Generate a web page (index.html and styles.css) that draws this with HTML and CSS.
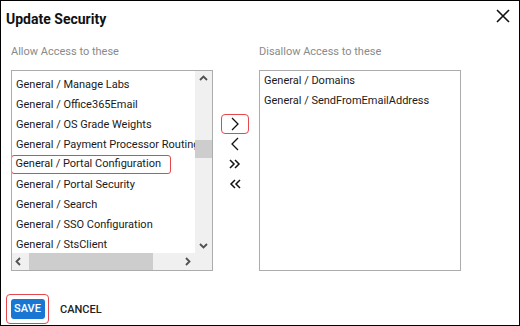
FILE: index.html
```html
<!DOCTYPE html>
<html>
<head>
<meta charset="utf-8">
<link rel="stylesheet" href="styles.css">
</head>
<body>
<div class="dialog">
  <div class="header">
    <div class="title">Update Security</div>
    <svg class="close" width="14" height="14" viewBox="0 0 14 14"><path d="M1 1L13 13M13 1L1 13" stroke="#111" stroke-width="1.6" fill="none"/></svg>
  </div>
  <div class="content">
    <div class="col">
      <div class="label">Allow Access to these</div>
      <div class="listbox">
        <div class="items shifted">
          <div class="item">General / Manage Labs</div>
          <div class="item">General / Office365Email</div>
          <div class="item">General / OS Grade Weights</div>
          <div class="item">General / Payment Processor Routing</div>
          <div class="item selected">General / Portal Configuration</div>
          <div class="item">General / Portal Security</div>
          <div class="item">General / Search</div>
          <div class="item">General / SSO Configuration</div>
          <div class="item">General / StsClient</div>
        </div>
        <div class="vscroll">
          <svg class="arr" width="17" height="14" viewBox="0 0 17 14"><path d="M5 9L8.5 5.5L12 9" stroke="#505050" stroke-width="1.8" fill="none"/></svg>
          <div class="vtrack"><div class="vthumb"></div></div>
          <svg class="arr" width="17" height="14" viewBox="0 0 17 14"><path d="M5 5L8.5 8.5L12 5" stroke="#505050" stroke-width="1.8" fill="none"/></svg>
        </div>
        <div class="hscroll">
          <svg class="arr" width="14" height="17" viewBox="0 0 14 17"><path d="M8 5L4.5 8.5L8 12" stroke="#505050" stroke-width="1.8" fill="none"/></svg>
          <div class="htrack"><div class="hthumb"></div></div>
          <svg class="arr" width="14" height="17" viewBox="0 0 14 17"><path d="M5 5L8.5 8.5L5 12" stroke="#505050" stroke-width="1.8" fill="none"/></svg>
        </div>
        <div class="corner"></div>
      </div>
    </div>
    <div class="mid">
      <div class="mbtn active"><svg width="10" height="14" viewBox="0 0 10 14"><path d="M2 1L8 7L2 13" stroke="#111" stroke-width="1.3" fill="none"/></svg></div>
      <div class="mbtn"><svg width="10" height="14" viewBox="0 0 10 14"><path d="M8 1L2 7L8 13" stroke="#111" stroke-width="1.3" fill="none"/></svg></div>
      <div class="mbtn"><svg width="14" height="12" viewBox="0 0 14 12"><path d="M2 2L6 6L2 10M7 2L11 6L7 10" stroke="#111" stroke-width="1.5" fill="none"/></svg></div>
      <div class="mbtn"><svg width="14" height="12" viewBox="0 0 14 12"><path d="M7 2L3 6L7 10M12 2L8 6L12 10" stroke="#111" stroke-width="1.5" fill="none"/></svg></div>
    </div>
    <div class="col">
      <div class="label">Disallow Access to these</div>
      <div class="listbox plain">
        <div class="items">
          <div class="item">General / Domains</div>
          <div class="item">General / SendFromEmailAddress</div>
        </div>
      </div>
    </div>
  </div>
  <div class="footer">
    <div class="save-wrap"><button class="save">SAVE</button></div>
    <button class="cancel">CANCEL</button>
  </div>
</div>
</body>
</html>
```
FILE: styles.css
```css
html, body {
  margin: 0;
  padding: 0;
  background: #fff;
}
body {
  font-family: Roboto, "Liberation Sans", sans-serif;
  color: #222;
}
.dialog {
  width: 520px;
  height: 326px;
  box-sizing: border-box;
  border: 1px solid #000;
  display: flex;
  flex-direction: column;
}
.header {
  display: flex;
  justify-content: space-between;
  align-items: flex-start;
  padding: 9px 9px 0 5px;
  height: 30px;
  box-sizing: border-box;
}
.title {
  font-size: 14px;
  font-weight: 700;
  color: #111;
  line-height: 18px;
}
.close {
  margin-top: -1px;
}
.content {
  display: flex;
  padding-left: 10px;
  padding-top: 14px;
}
.col {
  width: 202px;
  display: flex;
  flex-direction: column;
}
.label {
  font-size: 11px;
  color: #8a8a8a;
  line-height: 14px;
  height: 25px;
}
.listbox {
  width: 202px;
  height: 201px;
  box-sizing: border-box;
  border: 1px solid #acacac;
  display: grid;
  grid-template-columns: 1fr 17px;
  grid-template-rows: 1fr 17px;
  overflow: hidden;
}
.listbox.plain {
  display: block;
}
.items {
  overflow: hidden;
  padding: 0 0 0 4px;
  white-space: nowrap;
}
.items.shifted {
  padding-top: 4px;
}
.item {
  font-size: 11px;
  line-height: 20px;
  height: 20px;
  color: #1a1a1a;
}
.item.selected {
  box-sizing: border-box;
  margin-left: -5px;
  padding-left: 3.5px;
  width: 160px;
  height: 19px;
  line-height: 16px;
  margin-bottom: 1px;
  border: 1.5px solid #e5474c;
  border-radius: 3px;
}
.vscroll {
  background: #f0f0f0;
  display: flex;
  flex-direction: column;
}
.vtrack {
  flex: 1;
}
.vthumb {
  margin-top: 55px;
  height: 18px;
  background: #cdcdcd;
}
.hscroll {
  background: #f0f0f0;
  display: flex;
}
.htrack {
  flex: 1;
  display: flex;
  align-items: stretch;
}
.hthumb {
  margin-left: 3px;
  width: 124px;
  background: #cdcdcd;
}
.arr {
  display: block;
  flex: none;
}
.corner {
  background: #f0f0f0;
}
.mid {
  width: 46px;
  display: flex;
  flex-direction: column;
  align-items: center;
  padding-top: 69px;
}
.mbtn {
  width: 28px;
  height: 20px;
  display: flex;
  align-items: center;
  justify-content: center;
  box-sizing: border-box;
  margin-left: -2px;
}
.mbtn.active {
  border: 1.5px solid #e5474c;
  border-radius: 4px;
}
.footer {
  display: flex;
  align-items: center;
  padding: 23px 0 0 5px;
}
.save-wrap {
  border: 1.5px solid #e5474c;
  border-radius: 4px;
  padding: 4px 3.5px;
  display: flex;
}
.save {
  font-family: Roboto, "Liberation Sans", sans-serif;
  background: #1976d2;
  color: #fff;
  font-weight: 500;
  font-size: 11px;
  border: none;
  border-radius: 3px;
  width: 34px;
  height: 20px;
  padding: 0;
  line-height: 20px;
}
.cancel {
  font-family: Roboto, "Liberation Sans", sans-serif;
  background: none;
  border: none;
  font-size: 11px;
  font-weight: 500;
  color: #222;
  margin-left: 11px;
  padding: 0;
}
```
